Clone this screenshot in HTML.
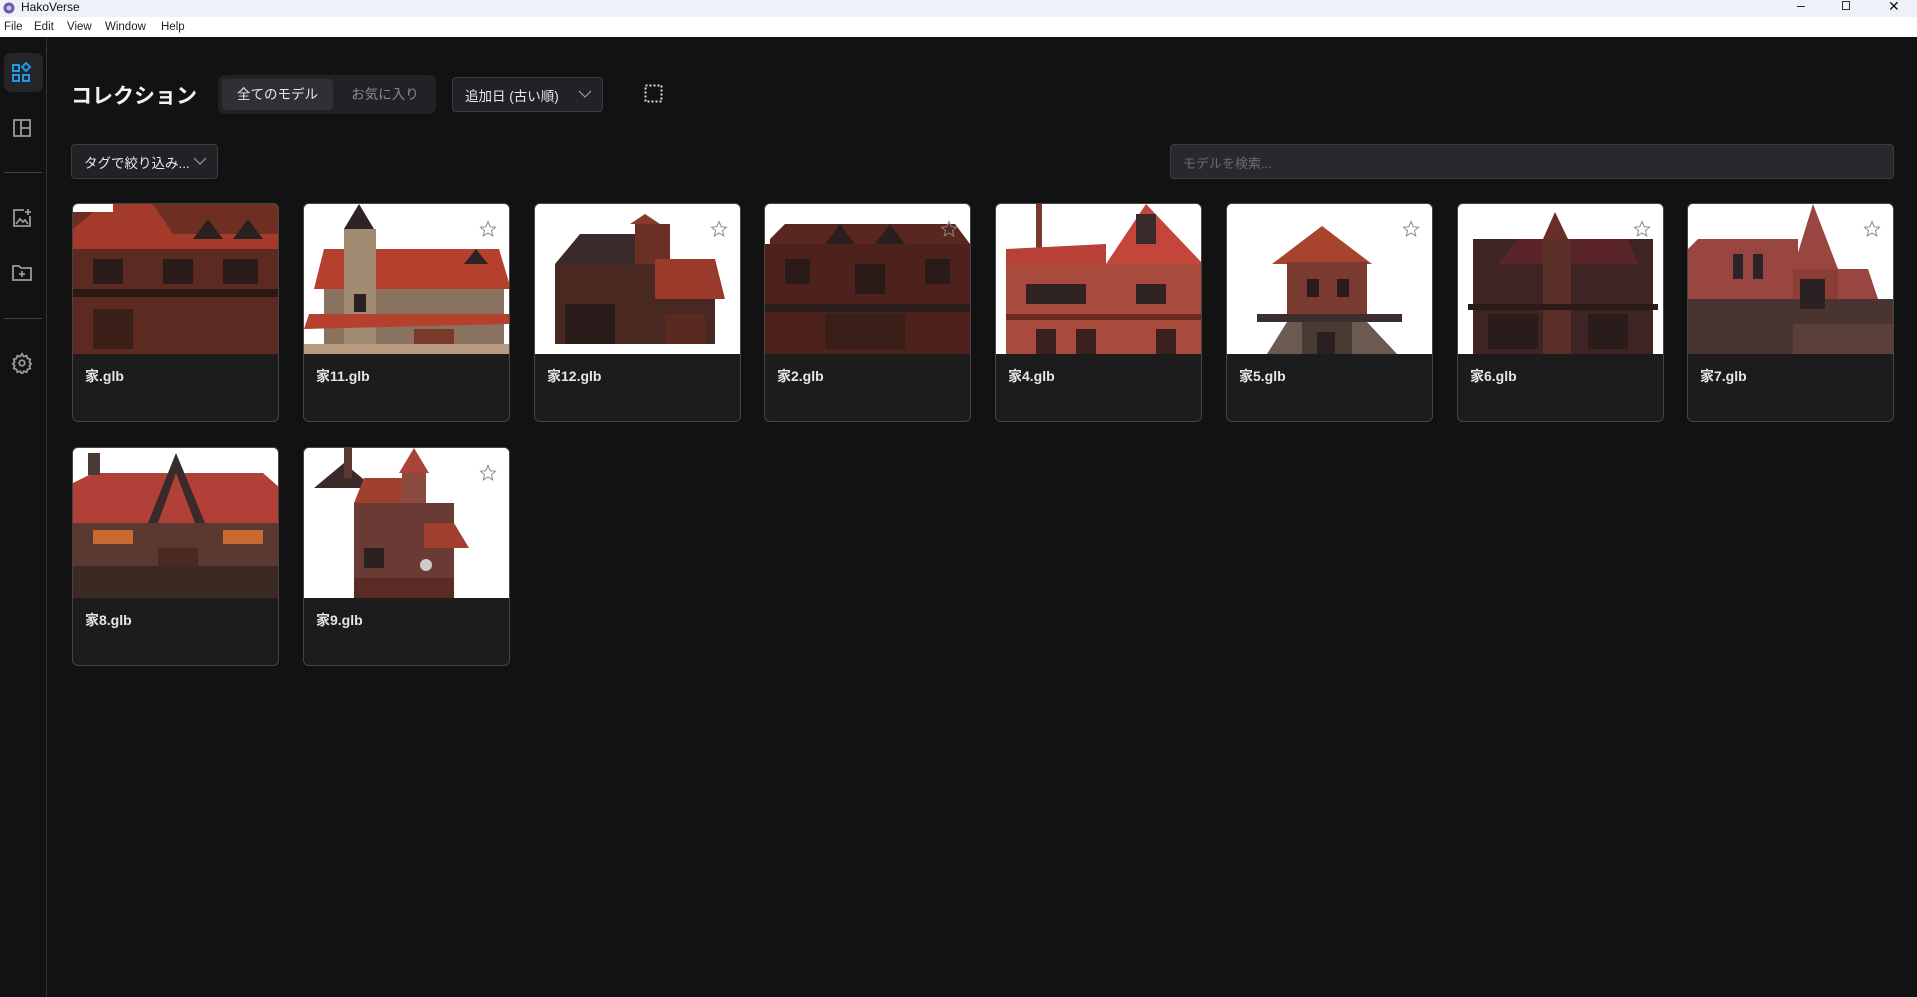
<!DOCTYPE html>
<html><head><meta charset="utf-8"><style>
*{box-sizing:border-box;margin:0;padding:0}
body{width:1917px;height:997px;overflow:hidden;background:#121212;font-family:"Liberation Sans","Noto Sans CJK JP",sans-serif;position:relative}
.tb{position:absolute;left:0;top:0;width:1917px;height:17px;background:#eef1f8;font-size:12px;color:#111}
.mb{position:absolute;left:0;top:17px;width:1917px;height:20px;background:#fff;font-size:11.5px;color:#222}
.mb span{position:absolute;top:4px}
.side{position:absolute;left:0;top:37px;width:47px;height:960px;border-right:1px solid #333}
.act{position:absolute;left:4px;top:16px;width:39px;height:39px;border-radius:7px;background:#252528}
.sep{position:absolute;left:4px;width:38px;height:1px;background:#444}
.ic{position:absolute;left:11px}
.a{position:absolute}
.title{left:71px;top:80px;color:#f2f2f2;font-size:21px;font-weight:bold}
.seg{left:218px;top:75px;width:218px;height:39px;border-radius:7px;background:#222226}
.seg .on{position:absolute;left:4px;top:4px;width:111px;height:31px;border-radius:4px;background:#303034;color:#e8e8e8;font-size:13.5px;text-align:center;line-height:31px}
.seg .off{position:absolute;left:122px;top:4px;width:90px;line-height:31px;color:#8a8a8e;font-size:13.5px;text-align:center}
.dd{border:1px solid #3c3c40;background:#222226;border-radius:4px;color:#e8e8e8;font-size:13.5px}
.card{position:absolute;width:207px;height:219px;border:1px solid #454548;border-radius:6px;background:#1c1c1c;overflow:hidden}
.card svg.h{position:absolute;left:0;top:0;width:207px;height:150px;background:#fff;display:block}
.card .n{position:absolute;left:12px;top:162px;color:#e6e6e6;font-size:14px;font-weight:bold}
.card .st{position:absolute;right:12px;top:16px}
</style></head><body>
<div class="tb"><svg width="12" height="12" style="position:absolute;left:3px;top:2px"><circle cx="6" cy="6" r="5.5" fill="#6a5aa8"/><circle cx="6" cy="6" r="2.5" fill="#c8c0e8"/></svg><span style="position:absolute;left:21px;top:0px">HakoVerse</span>
<span style="position:absolute;left:1797px;top:-3px;font-size:14px">–</span>
<span style="position:absolute;left:1842px;top:1px;width:8px;height:9px;border:1px solid #333"></span>
<span style="position:absolute;left:1888px;top:-2px;font-size:14px">✕</span></div>
<div class="mb"><span style="left:4px">File</span><span style="left:34px">Edit</span><span style="left:67px">View</span><span style="left:105px">Window</span><span style="left:161px">Help</span></div>
<div class="side">
<div class="act"></div>
<svg class="ic" style="top:25px" width="22" height="22" viewBox="0 0 22 22" fill="none" stroke="#1e9be8" stroke-width="2"><rect x="2" y="3" width="6" height="6"/><rect x="2" y="13" width="6" height="6"/><rect x="12" y="13" width="6" height="6"/><path d="M15 1l4 4-4 4-4-4z"/></svg>
<svg class="ic" style="top:80px" width="22" height="22" viewBox="0 0 22 22" fill="none" stroke="#999" stroke-width="1.8"><rect x="3" y="3" width="16" height="16"/><path d="M10 3v16M10 11h9"/></svg>
<div class="sep" style="top:135px"></div>
<svg class="ic" style="top:170px" width="22" height="22" viewBox="0 0 22 22" fill="none" stroke="#999" stroke-width="1.8"><path d="M13 3H3v16h16V9"/><path d="M5 17l4-5 3 3 2-2 3 4"/><path d="M17 2v6M14 5h6"/></svg>
<svg class="ic" style="top:225px" width="22" height="22" viewBox="0 0 22 22" fill="none" stroke="#999" stroke-width="1.8"><path d="M2 4h6l2 2h10v12H2z"/><path d="M11 9v6M8 12h6"/></svg>
<div class="sep" style="top:281px"></div>
<svg class="ic" style="top:315px" width="22" height="22" viewBox="0 0 24 24" fill="none" stroke="#999" stroke-width="2"><circle cx="12" cy="12" r="3"/><path d="M12 2l2 3 3-1 1 3 3 1-1 3 2 2-2 2 1 3-3 1-1 3-3-1-2 3-2-3-3 1-1-3-3-1 1-3-2-2 2-2-1-3 3-1 1-3 3 1z"/></svg>
</div>
<div class="a title">コレクション</div>
<div class="a seg"><div class="on">全てのモデル</div><div class="off">お気に入り</div></div>
<div class="a dd" style="left:452px;top:77px;width:151px;height:35px"><span style="position:absolute;left:12px;top:7px">追加日 (古い順)</span><svg style="position:absolute;right:10px;top:12px" width="14" height="9"><path d="M1 1l6 6 6-6" stroke="#aaa" fill="none"/></svg></div>
<svg class="a" style="left:644px;top:84px" width="19" height="19"><rect x="1.5" y="1.5" width="16" height="16" fill="none" stroke="#ddd" stroke-width="2" stroke-dasharray="2 2"/></svg>
<div class="a dd" style="left:71px;top:144px;width:147px;height:35px"><span style="position:absolute;left:12px;top:7px">タグで絞り込み...</span><svg style="position:absolute;right:10px;top:12px" width="14" height="9"><path d="M1 1l6 6 6-6" stroke="#aaa" fill="none"/></svg></div>
<div class="a dd" style="left:1170px;top:144px;width:724px;height:35px;background:#29292d"><span style="position:absolute;left:12px;top:8px;color:#6c6c70;font-size:13px">モデルを検索...</span></div>

<div class="card" style="left:72px;top:203px"><svg class="h" viewBox="0 0 207 150"><rect width="207" height="150" fill="#6e2e22"/><polygon points="0,25 30,0 80,0 100,30 207,30 207,45 0,45" fill="#a33a2a"/><rect x="0" y="45" width="207" height="105" fill="#5c2a20"/><rect x="0" y="85" width="207" height="8" fill="#2a1a16"/><rect x="20" y="55" width="30" height="25" fill="#2a1c1a"/><rect x="90" y="55" width="30" height="25" fill="#2a1c1a"/><rect x="150" y="55" width="35" height="25" fill="#2a1c1a"/><polygon points="120,35 135,15 150,35" fill="#2a2022"/><polygon points="160,35 175,15 190,35" fill="#2a2022"/><rect x="20" y="105" width="40" height="40" fill="#3a2018"/><rect x="0" y="0" width="40" height="8" fill="#fff"/></svg><div class="n">家.glb</div></div>

<div class="card" style="left:303px;top:203px"><svg class="h" viewBox="0 0 207 150"><rect width="207" height="150" fill="#fff"/><polygon points="20,45 195,45 207,85 10,85" fill="#b5402e"/><rect x="20" y="85" width="180" height="55" fill="#8a7260"/><polygon points="40,25 55,0 70,25" fill="#2e2426"/><rect x="40" y="25" width="32" height="115" fill="#a08a72"/><rect x="50" y="90" width="12" height="18" fill="#2a2222"/><polygon points="5,110 207,110 207,120 0,125" fill="#b5402e"/><rect x="110" y="125" width="40" height="20" fill="#7a3a2a"/><rect x="0" y="140" width="207" height="10" fill="#b89a80"/><polygon points="160,60 172,45 184,60" fill="#2e2426"/></svg><svg class="st" width="18" height="18" viewBox="0 0 24 24"><path d="M12 2l3 7 7 .6-5.4 4.6 1.7 7L12 17.3 5.7 21.2l1.7-7L2 9.6 9 9z" fill="none" stroke="#888" stroke-width="1.3"/></svg><div class="n">家11.glb</div></div>

<div class="card" style="left:534px;top:203px"><svg class="h" viewBox="0 0 207 150"><rect width="207" height="150" fill="#fff"/><polygon points="20,60 45,30 110,30 120,60" fill="#3a2a2a"/><polygon points="95,20 110,10 125,20" fill="#8a3a2a"/><rect x="100" y="20" width="35" height="60" fill="#6a3028"/><rect x="20" y="60" width="160" height="80" fill="#4a2822"/><polygon points="120,55 180,55 190,95 120,95" fill="#9a3a2a"/><rect x="30" y="100" width="50" height="40" fill="#2a1c1a"/><rect x="130" y="110" width="40" height="30" fill="#5a2a20"/></svg><svg class="st" width="18" height="18" viewBox="0 0 24 24"><path d="M12 2l3 7 7 .6-5.4 4.6 1.7 7L12 17.3 5.7 21.2l1.7-7L2 9.6 9 9z" fill="none" stroke="#888" stroke-width="1.3"/></svg><div class="n">家12.glb</div></div>

<div class="card" style="left:764px;top:203px"><svg class="h" viewBox="0 0 207 150"><rect width="207" height="150" fill="#fff"/><polygon points="5,35 20,20 190,20 205,40 205,150 0,150" fill="#5a2620"/><rect x="0" y="40" width="207" height="110" fill="#4e221c"/><polygon points="60,40 75,20 90,40" fill="#2a1e1e"/><polygon points="110,40 125,20 140,40" fill="#2a1e1e"/><rect x="20" y="55" width="25" height="25" fill="#2a1a18"/><rect x="90" y="60" width="30" height="30" fill="#2a1a18"/><rect x="160" y="55" width="25" height="25" fill="#2a1a18"/><rect x="0" y="100" width="207" height="8" fill="#2a1e1c"/><rect x="60" y="110" width="80" height="35" fill="#3a1e18"/></svg><svg class="st" width="18" height="18" viewBox="0 0 24 24"><path d="M12 2l3 7 7 .6-5.4 4.6 1.7 7L12 17.3 5.7 21.2l1.7-7L2 9.6 9 9z" fill="none" stroke="#888" stroke-width="1.3"/></svg><div class="n">家2.glb</div></div>

<div class="card" style="left:995px;top:203px"><svg class="h" viewBox="0 0 207 150"><rect width="207" height="150" fill="#fff"/><rect x="40" y="0" width="6" height="60" fill="#7a3a2a"/><polygon points="110,60 150,0 207,60" fill="#c4463a"/><polygon points="10,60 110,60 110,40 10,45" fill="#b84036"/><rect x="10" y="60" width="197" height="90" fill="#a84a3c"/><rect x="140" y="10" width="20" height="30" fill="#3a2a2a"/><rect x="30" y="80" width="60" height="20" fill="#2e2222"/><rect x="140" y="80" width="30" height="20" fill="#2e2222"/><rect x="10" y="110" width="197" height="6" fill="#6a2a22"/><rect x="40" y="125" width="20" height="25" fill="#3a2020"/><rect x="80" y="125" width="20" height="25" fill="#3a2020"/><rect x="160" y="125" width="20" height="25" fill="#3a2020"/></svg><div class="n">家4.glb</div></div>

<div class="card" style="left:1226px;top:203px"><svg class="h" viewBox="0 0 207 150"><rect width="207" height="150" fill="#fff"/><polygon points="45,60 95,22 145,60" fill="#a8442e"/><rect x="60" y="58" width="80" height="55" fill="#7a3a30"/><rect x="30" y="110" width="145" height="8" fill="#3a2e2e"/><polygon points="40,150 60,118 140,118 170,150" fill="#6a5a50"/><rect x="75" y="118" width="50" height="32" fill="#4a3a34"/><rect x="90" y="128" width="18" height="22" fill="#2a2020"/><rect x="80" y="75" width="12" height="18" fill="#2a1c1c"/><rect x="110" y="75" width="12" height="18" fill="#2a1c1c"/></svg><svg class="st" width="18" height="18" viewBox="0 0 24 24"><path d="M12 2l3 7 7 .6-5.4 4.6 1.7 7L12 17.3 5.7 21.2l1.7-7L2 9.6 9 9z" fill="none" stroke="#888" stroke-width="1.3"/></svg><div class="n">家5.glb</div></div>

<div class="card" style="left:1457px;top:203px"><svg class="h" viewBox="0 0 207 150"><rect width="207" height="150" fill="#fff"/><polygon points="85,35 97,8 110,35" fill="#6a2e2a"/><rect x="15" y="35" width="180" height="115" fill="#3e2422"/><polygon points="40,60 60,35 170,35 180,60" fill="#5a2428"/><rect x="85" y="35" width="28" height="115" fill="#5a3028"/><rect x="10" y="100" width="190" height="6" fill="#2a1a18"/><rect x="30" y="110" width="50" height="35" fill="#2a1c1a"/><rect x="130" y="110" width="40" height="35" fill="#2a1c1a"/></svg><svg class="st" width="18" height="18" viewBox="0 0 24 24"><path d="M12 2l3 7 7 .6-5.4 4.6 1.7 7L12 17.3 5.7 21.2l1.7-7L2 9.6 9 9z" fill="none" stroke="#888" stroke-width="1.3"/></svg><div class="n">家6.glb</div></div>

<div class="card" style="left:1687px;top:203px"><svg class="h" viewBox="0 0 207 150"><rect width="207" height="150" fill="#fff"/><polygon points="0,45 10,35 110,35 110,95 0,95" fill="#9a4640"/><polygon points="105,65 125,0 150,65" fill="#9a4640"/><rect x="105" y="65" width="45" height="55" fill="#8a3e36"/><polygon points="150,65 180,65 195,110 150,110" fill="#9a4640"/><rect x="0" y="95" width="207" height="55" fill="#4a3430"/><rect x="45" y="50" width="10" height="25" fill="#2a2428"/><rect x="65" y="50" width="10" height="25" fill="#2a2428"/><rect x="112" y="75" width="25" height="30" fill="#2a2222"/><rect x="105" y="120" width="100" height="30" fill="#5a4038"/></svg><svg class="st" width="18" height="18" viewBox="0 0 24 24"><path d="M12 2l3 7 7 .6-5.4 4.6 1.7 7L12 17.3 5.7 21.2l1.7-7L2 9.6 9 9z" fill="none" stroke="#888" stroke-width="1.3"/></svg><div class="n">家7.glb</div></div>

<div class="card" style="left:72px;top:447px"><svg class="h" viewBox="0 0 207 150"><rect width="207" height="150" fill="#fff"/><polygon points="0,35 20,25 190,25 207,40 207,75 0,75" fill="#b04038"/><polygon points="75,75 103,5 132,75" fill="#3a2a2a"/><polygon points="85,75 103,25 122,75" fill="#b04038"/><rect x="0" y="75" width="207" height="75" fill="#5a3a30"/><rect x="20" y="82" width="40" height="14" fill="#c86a30"/><rect x="150" y="82" width="40" height="14" fill="#c86a30"/><rect x="85" y="100" width="40" height="50" fill="#4a2a20"/><rect x="0" y="118" width="207" height="32" fill="#3a2a22"/><rect x="15" y="5" width="12" height="22" fill="#4a3a36"/></svg><div class="n">家8.glb</div></div>

<div class="card" style="left:303px;top:447px"><svg class="h" viewBox="0 0 207 150"><rect width="207" height="150" fill="#fff"/><polygon points="10,40 40,15 70,40" fill="#3a2a2a"/><rect x="40" y="0" width="8" height="30" fill="#5a3a30"/><polygon points="50,55 60,30 110,30 110,55" fill="#a24030"/><polygon points="95,25 110,0 125,25" fill="#a8443a"/><rect x="98" y="25" width="24" height="115" fill="#8a4a40"/><rect x="50" y="55" width="100" height="85" fill="#6a3a34"/><polygon points="120,75 150,75 165,100 120,100" fill="#a24030"/><rect x="60" y="100" width="20" height="20" fill="#2a2020"/><circle cx="122" cy="117" r="6" fill="#ccc"/><rect x="50" y="130" width="100" height="20" fill="#5a2a24"/></svg><svg class="st" width="18" height="18" viewBox="0 0 24 24"><path d="M12 2l3 7 7 .6-5.4 4.6 1.7 7L12 17.3 5.7 21.2l1.7-7L2 9.6 9 9z" fill="none" stroke="#888" stroke-width="1.3"/></svg><div class="n">家9.glb</div></div>
</body></html>
